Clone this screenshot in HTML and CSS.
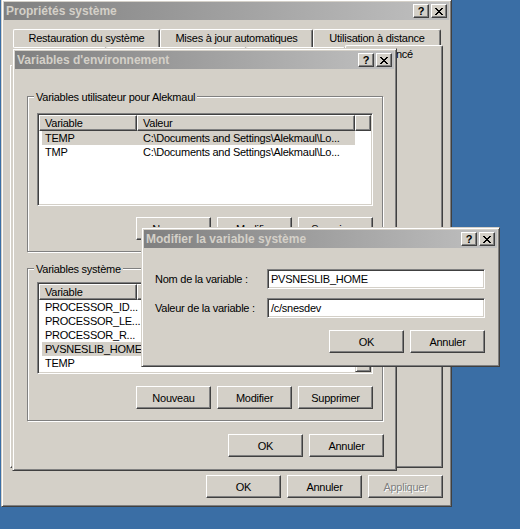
FILE: index.html
```html
<!DOCTYPE html>
<html lang="fr">
<head>
    <meta charset="UTF-8">
    <meta name="viewport" content="width=device-width, initial-scale=1.0">
    <title>Variables d'environnement</title>
    <link rel="stylesheet" href="styles.css">
</head>
<body>
<div class="bureau">

    <!-- Fenêtre Propriétés système -->
    <div class="fenetre fen-systeme">
        <div class="titre">
            <span class="titre-texte">Propriétés système</span>
            <span class="btn-titre">?</span>
            <span class="btn-titre">
                <svg class="croix" width="8" height="7" viewBox="0 0 8 7"><path d="M0 0h2v1H0zM6 0h2v1H6zM1 1h2v1H1zM5 1h2v1H5zM2 2h4v1H2zM3 3h2v1H3zM2 4h4v1H2zM1 5h2v1H1zM5 5h2v1H5zM0 6h2v1H0zM6 6h2v1H6z"/></svg>
            </span>
        </div>
        <div class="systeme-corps">
            <div class="onglets">
                <div class="onglet onglet-restauration">Restauration du système</div>
                <div class="onglet onglet-maj">Mises à jour automatiques</div>
                <div class="onglet onglet-distance">Utilisation à distance</div>
            </div>
            <!-- rangée avant : seuls les bords dépassent sous la boîte de dialogue -->
            <div class="onglets">
                <div class="onglet onglet-general"></div>
                <div class="onglet onglet-nom"></div>
                <div class="onglet onglet-materiel"></div>
                <div class="onglet onglet-avance onglet-actif">Avancé</div>
            </div>
            <div class="feuille"></div>
            <div class="rangee-boutons">
                <div class="bouton">OK</div>
                <div class="bouton">Annuler</div>
                <div class="bouton bouton-inactif">Appliquer</div>
            </div>
        </div>
    </div>

    <!-- Fenêtre Variables d'environnement -->
    <div class="fenetre fen-env">
        <div class="titre">
            <span class="titre-texte">Variables d'environnement</span>
            <span class="btn-titre">?</span>
            <span class="btn-titre">
                <svg class="croix" width="8" height="7" viewBox="0 0 8 7"><path d="M0 0h2v1H0zM6 0h2v1H6zM1 1h2v1H1zM5 1h2v1H5zM2 2h4v1H2zM3 3h2v1H3zM2 4h4v1H2zM1 5h2v1H1zM5 5h2v1H5zM0 6h2v1H0zM6 6h2v1H6z"/></svg>
            </span>
        </div>
        <div class="env-corps">
            <div class="groupe">
                <div class="groupe-titre">Variables utilisateur pour Alekmaul</div>
                <div class="liste">
                    <div class="liste-contenu">
                        <div class="entete">
                            <div class="col-entete col-variable">Variable</div>
                            <div class="col-entete col-valeur">Valeur</div>
                            <div class="col-entete col-vide"></div>
                        </div>
                        <div class="ligne ligne-choisie">
                            <span class="cel-variable">TEMP</span>
                            <span class="cel-valeur">C:\Documents and Settings\Alekmaul\Lo...</span>
                        </div>
                        <div class="ligne">
                            <span class="cel-variable">TMP</span>
                            <span class="cel-valeur">C:\Documents and Settings\Alekmaul\Lo...</span>
                        </div>
                    </div>
                </div>
                <div class="rangee-boutons">
                    <div class="bouton">Nouveau</div>
                    <div class="bouton">Modifier</div>
                    <div class="bouton">Supprimer</div>
                </div>
            </div>

            <div class="groupe groupe-systeme">
                <div class="groupe-titre">Variables système</div>
                <div class="liste">
                    <div class="liste-contenu">
                        <div class="entete">
                            <div class="col-entete col-variable">Variable</div>
                            <div class="col-entete col-valeur"></div>
                        </div>
                        <div class="ligne">
                            <span class="cel-variable">PROCESSOR_ID...</span>
                            <span class="cel-valeur"></span>
                        </div>
                        <div class="ligne">
                            <span class="cel-variable">PROCESSOR_LE...</span>
                            <span class="cel-valeur"></span>
                        </div>
                        <div class="ligne">
                            <span class="cel-variable">PROCESSOR_R...</span>
                            <span class="cel-valeur"></span>
                        </div>
                        <div class="ligne ligne-choisie">
                            <span class="cel-variable">PVSNESLIB_HOME</span>
                            <span class="cel-valeur"></span>
                        </div>
                        <div class="ligne">
                            <span class="cel-variable">TEMP</span>
                            <span class="cel-valeur">C:\WINDOWS\TEMP</span>
                        </div>
                    </div>
                    <div class="defil">
                        <div class="defil-bouton">
                            <svg width="7" height="4" viewBox="0 0 7 4"><path d="M3 0h1v1h1v1h1v1h1v1H0V3h1V2h1V1h1z"/></svg>
                        </div>
                        <div class="defil-piste"></div>
                        <div class="defil-bouton">
                            <svg width="7" height="4" viewBox="0 0 7 4"><path d="M0 0h7v1H6v1H5v1H4v1H3V3H2V2H1V1H0z"/></svg>
                        </div>
                    </div>
                </div>
                <div class="rangee-boutons">
                    <div class="bouton">Nouveau</div>
                    <div class="bouton">Modifier</div>
                    <div class="bouton">Supprimer</div>
                </div>
            </div>

            <div class="rangee-boutons">
                <div class="bouton">OK</div>
                <div class="bouton">Annuler</div>
            </div>
        </div>
    </div>

    <!-- Fenêtre Modifier la variable système -->
    <div class="fenetre fen-modif">
        <div class="titre">
            <span class="titre-texte">Modifier la variable système</span>
            <span class="btn-titre">?</span>
            <span class="btn-titre">
                <svg class="croix" width="8" height="7" viewBox="0 0 8 7"><path d="M0 0h2v1H0zM6 0h2v1H6zM1 1h2v1H1zM5 1h2v1H5zM2 2h4v1H2zM3 3h2v1H3zM2 4h4v1H2zM1 5h2v1H1zM5 5h2v1H5zM0 6h2v1H0zM6 6h2v1H6z"/></svg>
            </span>
        </div>
        <div class="modif-corps">
            <div class="champ">
                <span class="champ-libelle">Nom de la variable :</span>
                <span class="champ-saisie">PVSNESLIB_HOME</span>
            </div>
            <div class="champ">
                <span class="champ-libelle">Valeur de la variable :</span>
                <span class="champ-saisie">/c/snesdev</span>
            </div>
            <div class="rangee-boutons">
                <div class="bouton">OK</div>
                <div class="bouton">Annuler</div>
            </div>
        </div>
    </div>

</div>
</body>
</html>
```

FILE: styles.css
```css
* {
    margin: 0;
    padding: 0;
    box-sizing: border-box;
}

body {
    background: #3a6ea5;
    font-family: "Liberation Sans", Arial, sans-serif;
    font-size: 11px;
    letter-spacing: -0.25px;
    color: #000;
}

.bureau {
    position: relative;
    width: 520px;
    height: 529px;
    overflow: hidden;
}

/* Fenêtres : bord 3D classique */
.fenetre {
    position: absolute;
    display: flex;
    flex-direction: column;
    background: #d4d0c8;
    border: 1px solid;
    border-color: #d4d0c8 #404040 #404040 #d4d0c8;
    box-shadow: inset 1px 1px #fff, inset -1px -1px #808080;
    padding: 2px;
}

.fen-systeme {
    left: 1px;
    top: -1px;
    width: 451px;
    height: 508px;
    z-index: 1;
}

.fen-env {
    left: 12px;
    top: 48px;
    width: 385px;
    height: 423px;
    z-index: 2;
}

.fen-modif {
    left: 141px;
    top: 227px;
    width: 359px;
    height: 140px;
    z-index: 3;
}

/* Barre de titre inactive */
.titre {
    flex: none;
    height: 18px;
    display: flex;
    align-items: center;
    padding: 0 2px;
    background: linear-gradient(to right, #808080, #c0c0c0);
    color: #d4d0c8;
    font-size: 12px;
    font-weight: bold;
    letter-spacing: 0;
}

.titre-texte {
    flex: 1;
    white-space: nowrap;
    overflow: hidden;
}

.btn-titre {
    width: 16px;
    height: 14px;
    margin-left: 2px;
    display: flex;
    align-items: center;
    justify-content: center;
    background: #d4d0c8;
    border: 1px solid;
    border-color: #fff #404040 #404040 #fff;
    box-shadow: inset -1px -1px #808080;
    color: #000;
    font-size: 11px;
    line-height: 1;
}

.croix {
    display: block;
    fill: #000;
}

/* Boutons */
.rangee-boutons {
    flex: none;
    display: flex;
    justify-content: flex-end;
    gap: 6px;
}

.bouton {
    width: 75px;
    height: 23px;
    display: flex;
    align-items: center;
    justify-content: center;
    background: #d4d0c8;
    border: 1px solid;
    border-color: #fff #404040 #404040 #fff;
    box-shadow: inset -1px -1px #808080;
    white-space: nowrap;
}

.bouton-inactif {
    color: #808080;
    text-shadow: 1px 1px 0 #fff;
}

/* Propriétés système : onglets */
.systeme-corps {
    flex: 1;
    display: flex;
    flex-direction: column;
    padding: 9px 6px 6px;
}

.onglets {
    flex: none;
    display: flex;
    height: 18px;
    padding-left: 3px;
}

.onglet {
    flex: none;
    height: 18px;
    border: 1px solid;
    border-color: #fff #404040 transparent #fff;
    border-bottom: 0;
    border-radius: 2px 2px 0 0;
    box-shadow: inset -1px 0 #808080;
    background: #d4d0c8;
    text-align: center;
    line-height: 16px;
    white-space: nowrap;
    overflow: hidden;
}

.onglet-restauration { width: 147px; }
.onglet-maj { width: 153px; }
.onglet-distance { width: 128px; }
.onglet-general { width: 93px; }
.onglet-nom { width: 140px; }
.onglet-materiel { width: 99px; }

.onglet-avance {
    width: 98px;
    padding-left: 3px;
}

.onglet-actif {
    height: 21px;
    margin-top: -2px;
    z-index: 1;
}

.feuille {
    flex: 1;
    border: 1px solid;
    border-color: #fff #404040 #404040 #fff;
    box-shadow: inset -1px -1px #808080;
}

.systeme-corps .rangee-boutons {
    margin-top: 7px;
}

/* Variables d'environnement */
.env-corps {
    flex: 1;
    display: flex;
    flex-direction: column;
    padding: 27px 10px 10px 12px;
}

.groupe {
    width: 356px;
    border: 1px solid #808080;
    box-shadow: 1px 1px 0 #fff, inset 1px 1px 0 #fff;
    padding: 0 9px 11px;
}

.groupe + .groupe {
    margin-top: 16px;
}

.groupe-titre {
    width: max-content;
    margin: -6px 0 0 -3px;
    padding: 0 2px;
    line-height: 13px;
    background: #d4d0c8;
}

.liste {
    display: flex;
    height: 93px;
    margin-top: 9px;
    padding: 1px;
    border: 1px solid;
    border-color: #808080 #fff #fff #808080;
    box-shadow: inset 1px 1px #404040, inset -1px -1px #d4d0c8;
    background: #fff;
    overflow: hidden;
}

.groupe-systeme .liste {
    height: 92px;
    margin-top: 6px;
}

.groupe .rangee-boutons {
    margin-top: 11px;
}

.groupe-systeme .rangee-boutons {
    margin-top: 12px;
}

.env-corps > .rangee-boutons {
    margin-top: 13px;
}

.liste-contenu {
    flex: 1;
    min-width: 0;
}

.entete {
    display: flex;
    height: 16px;
}

.col-entete {
    flex: none;
    height: 16px;
    padding-left: 5px;
    background: #d4d0c8;
    border: 1px solid;
    border-color: #fff #404040 #404040 #fff;
    box-shadow: inset -1px -1px #808080;
    line-height: 14px;
    white-space: nowrap;
    overflow: hidden;
}

.col-variable { width: 98px; }
.col-valeur { width: 218px; }
.col-vide { flex: 1; }

.ligne {
    display: flex;
    width: 313px;
    height: 14px;
    margin-left: 3px;
    line-height: 14px;
    white-space: nowrap;
}

.ligne-choisie {
    background: #d4d0c8;
}

.cel-variable {
    flex: none;
    width: 95px;
    padding-left: 3px;
}

.cel-valeur {
    flex: 1;
    padding-left: 6px;
    overflow: hidden;
}

/* Barre de défilement verticale */
.defil {
    flex: none;
    width: 16px;
    display: flex;
    flex-direction: column;
    background: repeating-conic-gradient(#fff 0 25%, #d4d0c8 0 50%) 0 0 / 2px 2px;
}

.defil-bouton {
    height: 16px;
    display: flex;
    align-items: center;
    justify-content: center;
    background: #d4d0c8;
    border: 1px solid;
    border-color: #d4d0c8 #404040 #404040 #d4d0c8;
    box-shadow: inset 1px 1px #fff, inset -1px -1px #808080;
}

.defil-bouton svg {
    display: block;
    fill: #000;
}

.defil-piste {
    flex: 1;
}

/* Modifier la variable système */
.modif-corps {
    flex: 1;
    padding: 21px 12px 11px 11px;
}

.champ {
    display: flex;
    align-items: center;
    height: 20px;
}

.champ + .champ {
    margin-top: 9px;
}

.champ-libelle {
    flex: none;
    width: 112px;
    white-space: nowrap;
}

.champ-saisie {
    width: 218px;
    height: 20px;
    padding: 1px 3px;
    border: 1px solid;
    border-color: #808080 #fff #fff #808080;
    box-shadow: inset 1px 1px #404040, inset -1px -1px #d4d0c8;
    background: #fff;
    line-height: 16px;
    white-space: nowrap;
}

.modif-corps .rangee-boutons {
    margin-top: 12px;
}
```
